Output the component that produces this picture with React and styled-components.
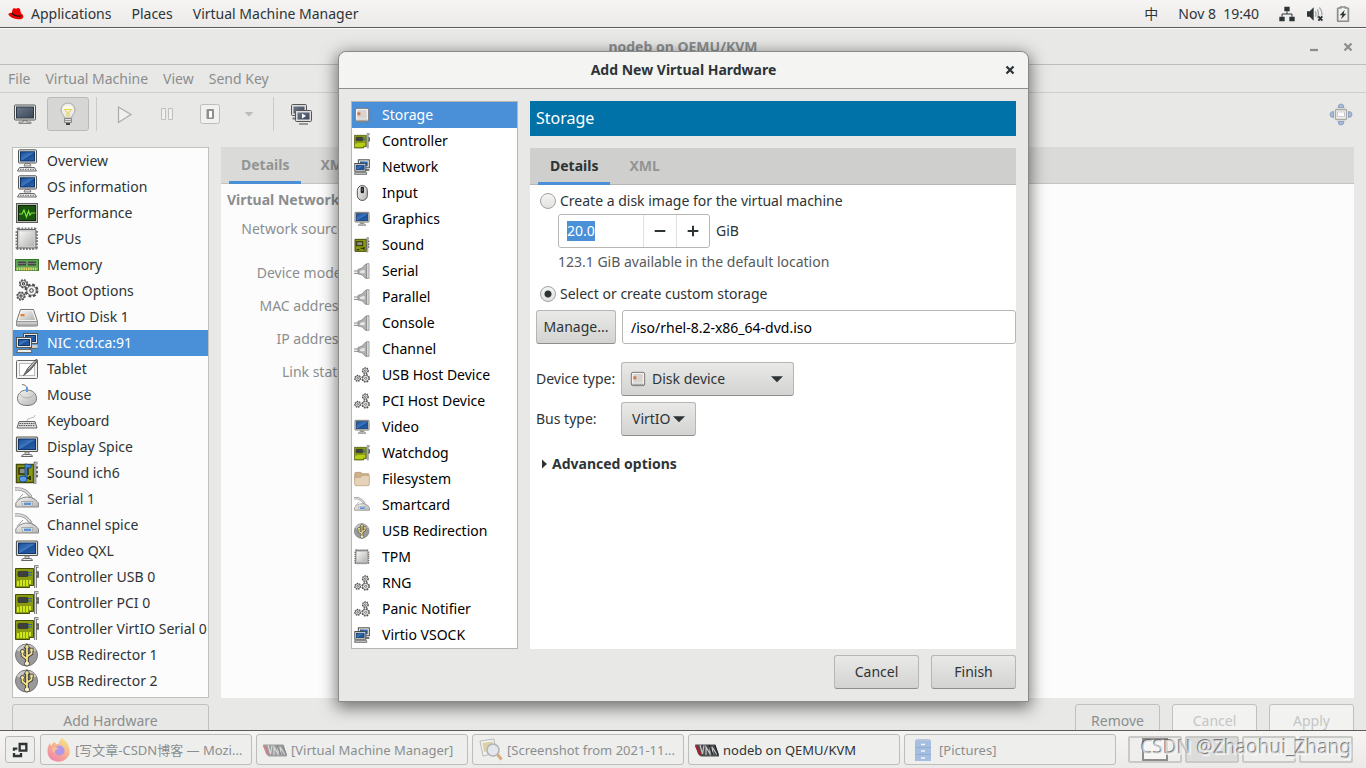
import React, { useEffect, useRef } from 'react'
import styled, { createGlobalStyle, css } from 'styled-components'

const GlobalStyle = createGlobalStyle`
    * {
        box-sizing: border-box;
    }
    body {
        margin: 0;
        background: #e8e8e6;
    }
    body, button, input, select {
        font-family: "Noto Sans", "Noto Sans CJK SC", sans-serif;
        font-size: 13px;
        line-height: 20px;
        color: #2e3436;
    }
    button {
        margin: 0;
        padding: 0;
        border: 0;
        background: none;
    }
    svg {
        display: block;
        flex: none;
    }
`

const Desktop = styled.div`
    position: relative;
    display: flex;
    flex-direction: column;
    height: 100vh;
    overflow: hidden;
`

/* ---------- top panel ---------- */

const TopBar = styled.header`
    display: flex;
    align-items: center;
    flex: none;
    height: 28px;
    padding: 0 15px 0 8px;
    background: linear-gradient(#f6f5f4, #eceae9);
    border-bottom: 1px solid #5b5b59;
`

const TopItem = styled.button`
    display: flex;
    align-items: center;
    gap: 7px;
    margin-right: 20px;
    font-size: 14px;
`

const Tray = styled.div`
    display: flex;
    align-items: center;
    margin-left: auto;
`

const TrayIcons = styled.div`
    display: flex;
    gap: 12px;
`

/* ---------- main window ---------- */

const Window = styled.main`
    display: flex;
    flex-direction: column;
    flex: 1;
    min-height: 0;
    overflow: hidden;
    color: #8b8e8f;
    border-top: 1px solid #fafafa;
`

const TitleBar = styled.div`
    display: grid;
    grid-template-columns: 1fr auto 1fr;
    align-items: center;
    flex: none;
    height: 36px;
    border-bottom: 1px solid #bdbdbb;
    font-size: 14px;
    font-weight: 700;
`

const TitleButtons = styled.div`
    grid-column: 3;
    display: flex;
    justify-content: flex-end;
    gap: 22px;
    padding-right: 12px;
    button {
        color: inherit;
    }
`

const Title = styled.div`
    grid-column: 2;
`

const MenuBar = styled.nav`
    display: flex;
    align-items: center;
    flex: none;
    gap: 15px;
    height: 28px;
    padding: 0 8px;
    border-bottom: 1px solid #cfcfcd;
`

const MenuItem = styled.button`
    font-size: 14px;
    color: #8b8e8f;
`

const ToolBar = styled.div`
    display: flex;
    align-items: center;
    flex: none;
    gap: 1px;
    height: 42px;
    padding: 0 4px;
`

const ToolButton = styled.button`
    display: flex;
    align-items: center;
    justify-content: center;
    width: ${p => p.$narrow ? '34px' : '42px'};
    height: 34px;
    border: 1px solid ${p => p.$on ? '#bbbbb9' : 'transparent'};
    border-radius: 3px;
    background: ${p => p.$on ? '#d6d6d4' : 'none'};
    color: #bcbcba;
`

const Divider = styled.div`
    width: 1px;
    height: 34px;
    margin: 0 5px 0 6px;
    background: #cacac8;
`

const Spacer = styled.div`
    flex: 1;
`

const Content = styled.div`
    display: grid;
    grid-template-columns: 197px 1fr;
    flex: none;
    gap: 6px 12px;
    padding: 12px;
`

const List = styled.div`
    display: flex;
    flex-direction: column;
    border: 1px solid ${p => p.$dim ? '#c0c0be' : '#b6b6b3'};
    background: ${p => p.$dim ? '#fcfcfc' : '#fff'};
    padding-bottom: ${p => p.$dim ? '3px' : '0'};
`

const Row = styled.button`
    display: flex;
    align-items: center;
    gap: ${p => p.$small ? '12px' : '8px'};
    height: 26px;
    padding: 0 2px;
    font-size: 14px;
    white-space: nowrap;
    color: ${p => p.$small ? '#000' : '#2e3436'};
    ${p => p.$active && css`
        background: #4a90d9;
        color: #fff;
    `}
`

const Panel = styled.section`
    display: flex;
    flex-direction: column;
    min-width: 0;
    background: ${p => p.$dim ? '#fcfcfc' : '#fff'};
`

const TabBar = styled.div`
    display: flex;
    gap: 7px;
    height: 37px;
    padding: 0 8px;
    background: ${p => p.$dim ? '#dadad8' : '#cfcfcd'};
    border-bottom: 1px solid ${p => p.$dim ? '#c4c4c2' : '#b6b6b3'};
`

const TabButton = styled.button`
    height: 37px;
    padding: 0 12px;
    font-size: 14px;
    font-weight: 700;
    color: ${p => p.$active && !p.$dim ? '#2e3436' : '#929595'};
    border-bottom: 3px solid ${p => p.$active ? '#4a90d9' : 'transparent'};
    border-top: 1px solid transparent;
`

const NicForm = styled.div`
    display: flex;
    flex-direction: column;
    width: 122px;
    margin-left: 6px;
    text-align: right;
    font-size: 14px;
    white-space: nowrap;
`

const NicTitle = styled.div`
    height: 28px;
    line-height: 32px;
    font-weight: 700;
    text-align: left;
`

const NicLabel = styled.div`
    height: 33px;
    line-height: 33px;
    margin-bottom: ${p => p.$spaced ? '11px' : '0'};
`

const Button = styled.button`
    height: 34px;
    min-width: ${p => p.$tight ? '80px' : '85px'};
    padding: 0 ${p => p.$tight ? '4px' : '8px'};
    border: 1px solid #b6b6b3;
    border-bottom-color: #8e918a;
    border-radius: 3px;
    background: linear-gradient(#e9e9e7, #d3d3d1);
    color: #2e3436;
    font-size: 14px;
    ${p => p.$dim && css`
        background: ${p.disabled ? '#f2f2f1' : '#e8e8e6'};
        border-color: #c0c0be;
        color: ${p.disabled ? '#c4c6c6' : '#8b8e8f'};
    `}
`

const ButtonRow = styled.div`
    display: flex;
    justify-content: flex-end;
    gap: 12px;
`

/* ---------- dialog ---------- */

const Dialog = styled.div`
    position: absolute;
    top: 51px;
    left: calc(50% - 345px);
    width: 691px;
    border: 1px solid #8a8a87;
    border-radius: 8px 8px 0 0;
    background: #e8e8e6;
    box-shadow: 0 4px 16px 2px rgba(0, 0, 0, 0.5);
`

const DialogTitle = styled(TitleBar)`
    height: 37px;
    border-bottom-color: #8e8e8b;
    border-radius: 8px 8px 0 0;
    background: #f4f4f3;
`

const DialogBody = styled.div`
    display: grid;
    grid-template-columns: 167px 1fr;
    gap: 6px 12px;
    padding: 12px;
`

const Side = styled.div`
    display: flex;
    flex-direction: column;
    min-width: 0;
`

const Banner = styled.h2`
    margin: 0 0 12px;
    padding: 0 6px;
    font-size: 16px;
    font-weight: 400;
    line-height: 35px;
    color: #fff;
    background: #0072a8;
`

const StoragePanel = styled(Panel)`
    flex: 1;
`

const Form = styled.form`
    display: flex;
    flex-direction: column;
    padding: 6px 0 0 6px;
    font-size: 14px;
`

const RadioLabel = styled.label`
    display: flex;
    align-items: center;
    gap: 4px;
    height: 20px;
    margin-left: 4px;
`

const Radio = styled.input`
    appearance: none;
    width: 16px;
    height: 16px;
    margin: 0;
    border: 1px solid #a2a29f;
    border-radius: 50%;
    background: linear-gradient(#f4f4f3, #e2e2e0);
    &:checked {
        background: radial-gradient(circle, #2e3436 3px, transparent 4px), linear-gradient(#f4f4f3, #e2e2e0);
    }
`

const SizeRow = styled.div`
    display: flex;
    align-items: center;
    gap: 6px;
    margin: 3px 0 4px 22px;
`

const Spin = styled.div`
    display: flex;
    width: 152px;
    height: 34px;
    border: 1px solid #b6b6b3;
    border-radius: 3px;
    background: #fff;
`

const SpinInput = styled.input`
    width: 84px;
    padding: 0 8px;
    border: 0;
    outline: 0;
    background: none;
    font-size: 14px;
    &::selection {
        background: #4a90d9;
        color: #fff;
    }
`

const SpinButton = styled.button`
    display: flex;
    align-items: center;
    justify-content: center;
    flex: 1;
    border-left: 1px solid #e0e0de;
`

const Hint = styled.div`
    margin: 0 0 12px 22px;
    color: #555a5b;
`

const PathRow = styled.div`
    display: flex;
    gap: 6px;
    margin: 6px 0 18px;
`

const PathInput = styled.input`
    flex: 1;
    min-width: 0;
    height: 34px;
    padding: 0 8px;
    border: 1px solid #b6b6b3;
    border-radius: 3px;
    font-size: 14px;
    color: #000;
`

const FieldRow = styled.div`
    display: flex;
    align-items: center;
    margin-bottom: 6px;
    label {
        width: 85px;
    }
`

const SelectBox = styled.div`
    position: relative;
    svg {
        position: absolute;
        top: 9px;
        pointer-events: none;
    }
    svg:first-child {
        left: 9px;
    }
    svg:last-child {
        right: 9px;
    }
`

const Select = styled.select`
    appearance: none;
    width: ${p => p.$narrow ? '75px' : '173px'};
    height: 34px;
    padding: 0 0 0 ${p => p.$narrow ? '10px' : '30px'};
    border: 1px solid #b6b6b3;
    border-bottom-color: #8e918a;
    border-radius: 3px;
    background: linear-gradient(#e9e9e7, #d3d3d1);
    font-size: 14px;
`

const Expander = styled.button`
    display: flex;
    align-items: center;
    gap: 2px;
    margin: 12px 0 0 2px;
    font-size: 14px;
    font-weight: 700;
`

const DialogButtons = styled(ButtonRow)`
    grid-column: 1 / -1;
`

/* ---------- bottom panel ---------- */

const TaskBar = styled.footer`
    position: relative;
    display: flex;
    align-items: center;
    flex: none;
    gap: 4px;
    height: 38px;
    padding: 0 13px 0 5px;
    background: linear-gradient(#f6f5f4, #eceae9);
    border-top: 1px solid #5b5b59;
`

const DeskButton = styled.button`
    display: flex;
    align-items: center;
    justify-content: center;
    width: 30px;
    height: 27px;
    margin-right: 1px;
    border: 1px solid #b9b9b7;
    border-radius: 3px;
    background: #eeeeed;
`

const Task = styled.button`
    display: flex;
    align-items: center;
    gap: 4px;
    flex: 0 1 212px;
    min-width: 0;
    height: 31px;
    padding: 0 4px 0 6px;
    border: 1px solid #bdbdbb;
    border-radius: 3px;
    background: #eeeeed;
    white-space: nowrap;
    color: ${p => p.$active ? '#2e3436' : '#8b8e8f'};
    svg {
        opacity: ${p => p.$active ? 1 : 0.5};
    }
`

const Workspaces = styled.div`
    display: flex;
    gap: 3px;
    margin-left: auto;
`

const Workspace = styled.button`
    display: flex;
    justify-content: center;
    width: 54px;
    height: 27px;
    border: 2px solid #c9c9c8;
    border-radius: 2px;
    background: ${p => p.$shaded ? '#dcdcdb' : '#eeeeed'};
`

const MiniWindow = styled.span`
    width: 26px;
    height: 23px;
    border: 2px solid #8d8d8c;
    background: #f6f5f4;
`

const Watermark = styled.div`
    position: absolute;
    right: 14px;
    top: 1px;
    font-size: 19px;
    line-height: 30px;
    color: rgba(225, 225, 225, 0.8);
    text-shadow: -1px -1px 0 rgba(90, 90, 90, 0.75), 1px 1px 1px rgba(255, 255, 255, 0.8);
    white-space: nowrap;
    pointer-events: none;
`

/* ---------- icons, drawn on a 24 unit grid ---------- */

const Defs = () => (
    <svg width="0" height="0" style={{ position: 'absolute' }} aria-hidden="true">
        <defs>
            <linearGradient id="screen" x1="0" y1="0" x2="1" y2="1">
                <stop offset="0" stopColor="#174a91" />
                <stop offset="0.5" stopColor="#3c78c0" />
                <stop offset="0.55" stopColor="#1c4f98" />
                <stop offset="1" stopColor="#2b65ad" />
            </linearGradient>
            <linearGradient id="slate" x1="0" y1="0" x2="1" y2="1">
                <stop offset="0" stopColor="#6d7a8a" />
                <stop offset="1" stopColor="#3a4658" />
            </linearGradient>
            <linearGradient id="metal" x1="0" y1="0" x2="1" y2="1">
                <stop offset="0" stopColor="#f6f6f6" />
                <stop offset="1" stopColor="#b4b4b2" />
            </linearGradient>
            <linearGradient id="fox" x1="0.8" y1="0" x2="0.2" y2="1">
                <stop offset="0" stopColor="#ffe226" />
                <stop offset="0.5" stopColor="#ff7139" />
                <stop offset="1" stopColor="#f5156c" />
            </linearGradient>
        </defs>
    </svg>
)

const Cog = ({ x, y, r }) => (
    <g transform={`translate(${x} ${y})`}>
        <circle r={r} fill="none" stroke="#4c4c4c" strokeWidth={r * 0.9} strokeDasharray={`${r * 0.48} ${r * 0.305}`} />
        <circle r={r} fill="#f2f2f1" stroke="#5a5a5a" strokeWidth="1" />
        <circle r={r * 0.36} fill="#fff" stroke="#444" strokeWidth="1.100" />
    </g>
)

const icons = {
    computer: (
        <>
            <rect x="3.500" y=".8" width="18" height="13.200" rx="1" fill="#e6e6e2" stroke="#54554f" />
            <rect x="5.500" y="2.800" width="14" height="9.200" fill="url(#screen)" stroke="#0f3369" />
            <path d="M10 14.500h5l1 2.500H9z" fill="#ddd" stroke="#666" strokeWidth=".8" />
            <path d="M4.500 18.500h15l2 3.500h-19z" fill="#eee" stroke="#666" />
            <path d="M5 20.300h14" stroke="#666" strokeDasharray="1.500 1" />
        </>
    ),
    monitor: (
        <>
            <rect x="1.500" y="2" width="21" height="14.500" rx="1" fill="#e6e6e2" stroke="#54554f" strokeWidth="1.200" />
            <rect x="3.500" y="4" width="17" height="10.500" fill="url(#screen)" stroke="#0f3369" />
            <path d="M10 17h4v2.500h-4z" fill="#ccc" stroke="#777" strokeWidth=".8" />
            <path d="M6.500 21.500c0-2 2-2 5.500-2s5.500 0 5.500 2z" fill="#eee" stroke="#666" />
        </>
    ),
    pulse: (
        <>
            <rect x="1.500" y="2.500" width="21" height="19" fill="#b9bab5" stroke="#5d5e59" />
            <rect x="3.500" y="4.500" width="17" height="15" fill="#1b5410" stroke="#0c2806" />
            <path d="M4 13h3l2-4 2.500 7 2-6 1.500 4 1.500-2h4" fill="none" stroke="#7be83a" strokeWidth="1.200" />
        </>
    ),
    chip: (
        <>
            <rect x="2.500" y="2.500" width="18.500" height="18.500" rx="1" fill="none" stroke="#7a7a78" strokeWidth="4" strokeDasharray="1.700 1.380" />
            <rect x="2.500" y="2.500" width="18.500" height="18.500" rx="1" fill="#ccc" stroke="#666" />
            <rect x="4.500" y="4.500" width="14.500" height="14.500" fill="url(#metal)" />
        </>
    ),
    ram: (
        <>
            <rect x=".5" y="6.500" width="23" height="11" fill="#5fa653" stroke="#34752c" />
            <path d="M3 8.500h8v4H3zM13 8.500h8v4h-8z" fill="#454545" />
            <path d="M3 10.500h18" stroke="#777" />
            <path d="M1.500 16h21" stroke="#e5d368" strokeWidth="3" strokeDasharray="1.500 .8" />
        </>
    ),
    gears: (
        <>
            <Cog x={8.500} y={4.800} r={3.200} />
            <Cog x={6} y={17} r={3.200} />
            <Cog x={16.500} y={11.500} r={4.800} />
        </>
    ),
    cogs: (
        <>
            <Cog x={17} y={5.500} r={3.600} />
            <Cog x={5.500} y={17} r={3.600} />
            <Cog x={17.500} y={17} r={4.400} />
        </>
    ),
    disk: (
        <>
            <path d="M5.500 4.500h13l4 12v3.500q0 1-1 1h-19q-1 0-1-1v-3.500z" fill="#f2f2f1" stroke="#777" />
            <path d="M1.500 16.500h21v3.500h-21z" fill="#c9c9c7" stroke="#888" strokeWidth=".8" />
            <path d="M7 6h10l3 9H4z" fill="url(#metal)" />
            <rect x="5.500" y="9" width="4" height="2.200" fill="#ec7a2d" />
        </>
    ),
    nic: (
        <>
            <rect x="8.500" y="2.500" width="14" height="10" fill="#e6e6e2" stroke="#54554f" />
            <rect x="10.500" y="4.500" width="10" height="6" fill="url(#screen)" stroke="#0f3369" />
            <path d="M14 15.500h8.500" stroke="#ccc" strokeWidth="3.500" />
            <path d="M14 17.500h9" stroke="#666" />
            <rect x="1.500" y="6.500" width="15" height="10" fill="#e6e6e2" stroke="#54554f" />
            <rect x="3.500" y="8.500" width="11" height="6" fill="url(#screen)" stroke="#0f3369" />
            <path d="M3 18.500h13l1 3H1.500z" fill="#eee" stroke="#666" />
        </>
    ),
    network: (
        <>
            <rect x="6.500" y="1.200" width="16.500" height="12" fill="#e6e6e2" stroke="#44453f" strokeWidth="1.400" />
            <rect x="9" y="3.800" width="11.500" height="7" fill="url(#screen)" />
            <path d="M18 16.500h5" stroke="#777" strokeWidth="3" />
            <rect x="1.200" y="6.800" width="16.500" height="11.500" fill="#e6e6e2" stroke="#44453f" strokeWidth="1.400" />
            <rect x="3.600" y="9.200" width="11.600" height="6.800" fill="url(#screen)" stroke="#0f3369" />
            <path d="M1 20.500h18v2.500H1z" fill="#ddd" stroke="#555" strokeWidth="1.200" />
        </>
    ),
    tablet: (
        <>
            <rect x="1.500" y="3.500" width="21" height="18" rx="1" fill="#f3f3f2" stroke="#666" />
            <rect x="4.500" y="6.500" width="15" height="12" fill="#fff" stroke="#bbb" />
            <path d="M21.500 2L13 11l-4.500 7.500 7-5.500 7-9z" fill="#777" stroke="#444" strokeWidth=".8" />
            <path d="M20.500 4l-7 8" stroke="#ddd" />
        </>
    ),
    mouse: (
        <>
            <path d="M7 1.500q3-.5 5 3v3" fill="none" stroke="#777" />
            <path d="M12 7c6 0 9.500 4 9.500 8.500S18 22.500 12 22.500 2.500 20 2.500 15.500 6 7 12 7z" fill="url(#metal)" stroke="#777" />
            <path d="M5 11q2 4 7 4t7-4" fill="none" stroke="#aaa" strokeWidth=".8" />
            <rect x="11" y="4" width="2" height="5" fill="#5b9be0" />
        </>
    ),
    keyboard: (
        <>
            <path d="M12 12q0-3 4-3t4-3" fill="none" stroke="#bbb" />
            <path d="M4 12.500h16l2 6.500H2z" fill="#ddd" stroke="#666" />
            <path d="M4.500 14.500h15M4 16.500h16" stroke="#555" strokeWidth="1.200" strokeDasharray="1.500 .8" />
        </>
    ),
    soundcard: (
        <>
            <path d="M1.500 3.500h17v18h-17z" fill="#8a9a12" stroke="#454d08" strokeWidth="1.500" />
            <rect x="4" y="7" width="9" height="6" fill="#8d8f80" stroke="#2e3205" strokeWidth="1.500" />
            <path d="M4 19h4M10 17h4M15 15v4" stroke="#2f3606" strokeWidth="2" />
            <path d="M22.500 2h-2.500v21M21 6.500h2M21 11h2M21 15h2" fill="none" stroke="#666" strokeWidth="2.600" />
            <path d="M22.500 2h-2.500v21" fill="none" stroke="#ddd" strokeWidth="1" />
        </>
    ),
    note: (
        <>
            <path d="M10 17V3l6 1v3l-4-.5V18" fill="#4a8fdd" stroke="#1d4e8f" />
            <ellipse cx="8" cy="18" rx="4" ry="3" fill="#5b9be6" stroke="#1d4e8f" />
        </>
    ),
    card: (
        <>
            <path d="M.5 3.500h18v17h-4v2H.5z" fill="#8a9a12" stroke="#454d08" />
            <rect x="3" y="6.500" width="10" height="5" rx="1" fill="#3c4043" stroke="#222" strokeWidth=".6" />
            <path d="M13 7.500h4M13 10h4" stroke="#2b62a8" strokeWidth="1.200" />
            <path d="M3 21v-5M6 21v-6M9 21v-6M12 21v-6M15 19v-4" stroke="#d7f01a" strokeWidth="1.800" />
            <path d="M23.500 1.500h-3V23M21 7.500h2.500v4H21" fill="none" stroke="#666" strokeWidth="2.600" />
            <path d="M23.500 1.500h-3V23" fill="none" stroke="#ddd" strokeWidth="1" />
        </>
    ),
    serial: (
        <>
            <path d="M0 2c9-1 12 3 16 8" fill="none" stroke="#999" strokeWidth="3.400" />
            <path d="M0 2c9-1 12 3 16 8" fill="none" stroke="#ddd" strokeWidth="1.600" />
            <path d="M8 7L2 13.500M15 9l7 5" fill="none" stroke="#999" />
            <path d="M4 12.500q8-5 16 0l3.500 3.500v4H.8v-4z" fill="url(#metal)" stroke="#8a8a88" />
            <path d="M6.500 14.500h11.500l-1 4.500H8z" fill="#f4f4f3" stroke="#999" strokeWidth=".8" />
            <path d="M8.500 15.500h8l-.5 2.500H9z" fill="#5f94cf" />
        </>
    ),
    usb: (
        <>
            <circle cx="11.500" cy="12" r="11" fill="#9a9a9a" stroke="#777" />
            <path d="M3 8a10 10 0 0 1 17 0" fill="none" stroke="#c8c8c8" strokeWidth="3" />
            <path d="M12 5v15M12 16l-4.500-3.500V9M12 13.500l4.500-3V7" stroke="#333" strokeWidth="3.400" fill="none" />
            <path d="M12 .8l3 4.200H9z" fill="#f5e38a" stroke="#333" strokeWidth=".8" />
            <circle cx="12" cy="20.500" r="2.500" fill="#fbf4c8" stroke="#333" strokeWidth=".8" />
            <circle cx="7.500" cy="8.500" r="2" fill="#f5e38a" stroke="#333" strokeWidth=".8" />
            <path d="M14.800 5.200h3.400v3.400h-3.400z" fill="#f5e38a" stroke="#333" strokeWidth=".8" />
            <path d="M12 4v15M12 16l-4.500-3.500V9M12 13.500l4.500-3V7" stroke="#f5e38a" strokeWidth="1.800" fill="none" />
        </>
    ),
    storage: (
        <>
            <rect x="2" y="2" width="20" height="20" rx="2.500" fill="#f4f2f0" stroke="#7c7875" strokeWidth="1.500" />
            <rect x="5" y="4.500" width="14" height="13" fill="#d6d3d0" />
            <path d="M3.500 20h17" stroke="#a9a6a3" strokeWidth="2" />
            <rect x="5" y="8" width="4.500" height="4.500" fill="#cf7a45" />
        </>
    ),
    pointer: (
        <>
            <rect x="5" y=".8" width="15" height="22.400" rx="7.500" fill="url(#metal)" stroke="#555" strokeWidth="1.500" />
            <rect x="10" y="2.500" width="5" height="10" rx="2" fill="#222" />
            <path d="M12.500 5v4" stroke="#999" />
        </>
    ),
    jack: (
        <>
            <path d="M0 12h7M0 15.500h7" stroke="#888" strokeWidth="1.500" />
            <path d="M6 9.500q6 0 11-7.500h2v21h-2q-4-7-11-6.500z" fill="#b0b0ae" stroke="#777" />
            <path d="M9 12.500q3-2 7-2v5q-4 0-7-1z" fill="#e6e6e4" />
            <path d="M19 1h3.500v22H19z" fill="#e4e4e4" stroke="#777" />
        </>
    ),
    folder: (
        <>
            <path d="M1 5q0-3 2-3h7q1.500 0 1.500 2H22v9H1z" fill="#cfb08c" stroke="#b3906a" />
            <path d="M1 9.500h9l2-3h11V20q0 2-2 2H3q-2 0-2-2z" fill="#e6d2b8" stroke="#b89a76" />
        </>
    ),
    console: (
        <>
            <rect x="1.500" y="3" width="21" height="15" rx="1" fill="#e9e9e7" stroke="#555" />
            <rect x="3.500" y="5" width="17" height="11" fill="url(#slate)" stroke="#2d3747" />
            <path d="M10 18.500h4V20h4v1.500H6V20h4z" fill="#ccc" stroke="#666" strokeWidth=".7" />
        </>
    ),
    bulb: (
        <>
            <path d="M12 1a7 7 0 0 1 7 7c0 4-3.500 5-3.500 8h-7C8.500 13 5 12 5 8a7 7 0 0 1 7-7z" fill="#ecece8" stroke="#aaa" />
            <path d="M12 3.500a5 5 0 0 0-5 4q5 3 10 0a5 5 0 0 0-5-4z" fill="#fdfbe0" />
            <path d="M8 7.500h8M9 7.500q1 3 3 3t3-3M11 11v4M13 11v4" fill="none" stroke="#e5cf4c" />
            <path d="M8.500 16.500h7v4h-7z" fill="#ddd" stroke="#888" />
            <path d="M8.500 18.500h7" stroke="#999" />
            <path d="M10 21h4v2h-4z" fill="#444" />
        </>
    ),
    play: <path d="M6.500 5v15.500L19 12.500z" fill="#f0f0ef" stroke="#aaaaa8" strokeWidth="1.200" />,
    pause: <path d="M6.500 6.500h4v11h-4zM13.500 6.500h4v11h-4z" fill="#efefee" stroke="#c0c0be" />,
    power: (
        <>
            <rect x="2.500" y="2.500" width="19" height="19" rx="2" fill="#f1f1f0" stroke="#bdbdbb" />
            <rect x="8.500" y="7" width="7.500" height="10" rx="1" fill="#8f8f8d" />
            <rect x="11" y="9" width="3" height="6.500" fill="#fff" />
        </>
    ),
    caret: <path d="M3 8h18l-9 9z" fill="currentColor" />,
    screens: (
        <>
            <rect x="2.500" y="2.500" width="15" height="11" rx="1" fill="#ddd" stroke="#555" />
            <rect x="4.500" y="4.500" width="11" height="7" fill="url(#slate)" />
            <path d="M3.500 16.500h5" stroke="#777" strokeWidth="2" />
            <rect x="6.500" y="8.500" width="16" height="11" rx="1" fill="#ddd" stroke="#555" />
            <rect x="8.500" y="10.500" width="12" height="7" fill="url(#slate)" />
            <path d="M13 11.500v5l4-2.500z" fill="#fff" />
            <path d="M10 22h9" stroke="#999" strokeWidth="2" />
        </>
    ),
    fullscreen: (
        <>
            <rect x="6.500" y="7.500" width="11" height="10" rx="1" fill="#f0f0ee" stroke="#a9aaa5" strokeWidth="1.300" />
            <rect x="8.500" y="10" width="7" height="4.500" fill="#fff" stroke="#ccc" />
            <path
                d="M9 5.500q0-3.500 3-3.500t3 3.500zM9 19.500q0 3.500 3 3.500t3-3.500zM4.500 9.500Q1 9.500 1 12.500t3.500 3zM19.500 9.500q3.500 0 3.500 3t-3.500 3z"
                fill="#a9bad6"
                stroke="#8399bf"
                strokeWidth=".8"
            />
        </>
    ),
    hat: (
        <>
            <path d="M5.500 11l1.500-6q.5-2 3-1.500l2 .5 3-1q2 0 3 2l1.500 6q4 2 3.500 5.500-1 4-8 3.500-9-.8-14-6.500-1.500-3 3.500-3.500z" fill="#e00" />
            <path d="M5.500 10.500q5 5.500 14 4.500" fill="none" stroke="#1a1a1a" strokeWidth="1.800" />
        </>
    ),
    lan: (
        <>
            <path d="M8 1h8v7H8zM.5 16h8v7h-8zM15.500 16h8v7h-8z" fill="#2e3436" />
            <path d="M12 8v4M4.500 16v-4h15v4" fill="none" stroke="#2e3436" strokeWidth="1.500" />
        </>
    ),
    volume: (
        <>
            <path d="M0 8h4l6-6v20l-6-6H0z" fill="#2e3436" />
            <path d="M12.500 8q2 4 0 8M15.500 5q3.500 6 0 13M18.500 2q5 6 3.500 12" fill="none" stroke="#a5a7a7" strokeWidth="2" />
            <path d="M17 15.500l6 6.500M23 15.500L17 22" stroke="#2e3436" strokeWidth="3" />
        </>
    ),
    battery: (
        <>
            <path d="M8.500 3V1.500h7V3H19q1 0 1 1v18q0 1-1 1H5q-1 0-1-1V4q0-1 1-1z" fill="none" stroke="#8b8e8f" strokeWidth="2.600" />
            <path d="M14.500 6L7 14h4l-2 6 8-8.500h-4z" fill="#2e3436" />
        </>
    ),
    close: <path d="M5 5l14 14M19 5L5 19" stroke="currentColor" strokeWidth="4.500" />,
    minimize: <path d="M4 18h16" stroke="currentColor" strokeWidth="4.500" />,
    minus: <path d="M4 12h16" stroke="currentColor" strokeWidth="3" />,
    plus: <path d="M4 12h16M12 4v16" stroke="currentColor" strokeWidth="3" />,
    triangle: <path d="M8 3l10 9-10 9z" fill="currentColor" />,
    desk: (
        <>
            <path d="M11.500 3h10v10h-10z" fill="none" stroke="#2e3436" strokeWidth="3.500" />
            <path d="M8 10H3v3M3 16.500V21h10.500v-4.500" fill="none" stroke="#2e3436" strokeWidth="3.500" />
        </>
    ),
    firefox: (
        <>
            <path d="M15 0q5 3 6.500 8Q25 16 19 21t-14 1Q-1 18 1 9q1-3 2-4l1 3q1-3 4-4l1 2h3q-1-3 3-6z" fill="url(#fox)" />
            <circle cx="12.500" cy="12.500" r="5" fill="#7542e5" />
            <path d="M6 9q4 0 6 2-5 0-4 4-4-1-2-6z" fill="#ff9640" />
        </>
    ),
    vmm: (
        <>
            <path d="M0 6.500h20l4 10v2H6L3 16z" fill="#4a4d4f" />
            <path d="M1 7.500l4.500 9.500" stroke="#a5202c" strokeWidth="2.400" />
            <path d="M5 7l2.500 9L9 7.500M11 17V9l4 7V9M18 17l-1-8 5 7.500" fill="none" stroke="#c4c7c7" strokeWidth="1.200" />
            <path d="M14 7l4 10M20 7l3 10" stroke="#222426" strokeWidth="1.200" />
        </>
    ),
    photo: (
        <>
            <path d="M1 3l14-2 2 14-13 3z" fill="#f5f5f0" stroke="#888" />
            <path d="M3.500 5l10-1.500 1 8.500-9.500 2z" fill="#c9b668" />
            <circle cx="14" cy="12" r="6" fill="#d5e2ee" stroke="#777" strokeWidth="1.500" />
            <path d="M18.500 16.500l4 5" stroke="#c76a1b" strokeWidth="3" />
        </>
    ),
    cabinet: (
        <>
            <path d="M4 3l2-2h12l2 2v20H4z" fill="#5b8fd6" />
            <path d="M4 3l2-2h12l2 2z" fill="#7f9fc9" />
            <path d="M4 9.500h16M4 16.500h16" stroke="#3d6db3" />
            <path d="M10 6.500h4M10 13h4M10 20h4" stroke="#fff" strokeWidth="1.500" />
        </>
    ),
}

icons.sound = <>{icons.soundcard}{icons.note}</>

const Icon = ({ name, size = 24 }) => (
    <svg width={size} height={size} viewBox="0 0 24 24" aria-hidden="true">{icons[name]}</svg>
)

/* ---------- data ---------- */

const devices = [
    ['computer', 'Overview'],
    ['computer', 'OS information'],
    ['pulse', 'Performance'],
    ['chip', 'CPUs'],
    ['ram', 'Memory'],
    ['gears', 'Boot Options'],
    ['disk', 'VirtIO Disk 1'],
    ['nic', 'NIC :cd:ca:91'],
    ['tablet', 'Tablet'],
    ['mouse', 'Mouse'],
    ['keyboard', 'Keyboard'],
    ['monitor', 'Display Spice'],
    ['sound', 'Sound ich6'],
    ['serial', 'Serial 1'],
    ['serial', 'Channel spice'],
    ['monitor', 'Video QXL'],
    ['card', 'Controller USB 0'],
    ['card', 'Controller PCI 0'],
    ['card', 'Controller VirtIO Serial 0'],
    ['usb', 'USB Redirector 1'],
    ['usb', 'USB Redirector 2'],
]

const hardware = [
    ['storage', 'Storage'],
    ['card', 'Controller'],
    ['network', 'Network'],
    ['pointer', 'Input'],
    ['monitor', 'Graphics'],
    ['soundcard', 'Sound'],
    ['jack', 'Serial'],
    ['jack', 'Parallel'],
    ['jack', 'Console'],
    ['jack', 'Channel'],
    ['cogs', 'USB Host Device'],
    ['cogs', 'PCI Host Device'],
    ['monitor', 'Video'],
    ['card', 'Watchdog'],
    ['folder', 'Filesystem'],
    ['serial', 'Smartcard'],
    ['usb', 'USB Redirection'],
    ['chip', 'TPM'],
    ['cogs', 'RNG'],
    ['cogs', 'Panic Notifier'],
    ['network', 'Virtio VSOCK'],
]

const tasks = [
    ['firefox', '[写文章-CSDN博客 — Mozi...'],
    ['vmm', '[Virtual Machine Manager]'],
    ['photo', '[Screenshot from 2021-11...'],
    ['vmm', 'nodeb on QEMU/KVM'],
    ['cabinet', '[Pictures]'],
]

const Tabs = ({ dim }) => (
    <TabBar $dim={dim}>
        <TabButton $active $dim={dim}>Details</TabButton>
        <TabButton $dim={dim}>XML</TabButton>
    </TabBar>
)

const MainWindow = () => (
    <Window>
        <TitleBar>
            <Title>nodeb on QEMU/KVM</Title>
            <TitleButtons>
                <button aria-label="Minimize"><Icon name="minimize" size={12} /></button>
                <button aria-label="Close"><Icon name="close" size={12} /></button>
            </TitleButtons>
        </TitleBar>
        <MenuBar>
            <MenuItem>File</MenuItem>
            <MenuItem>Virtual Machine</MenuItem>
            <MenuItem>View</MenuItem>
            <MenuItem>Send Key</MenuItem>
        </MenuBar>
        <ToolBar>
            <ToolButton aria-label="Console"><Icon name="console" /></ToolButton>
            <ToolButton $on aria-label="Details"><Icon name="bulb" /></ToolButton>
            <Divider />
            <ToolButton aria-label="Run"><Icon name="play" /></ToolButton>
            <ToolButton aria-label="Pause"><Icon name="pause" /></ToolButton>
            <ToolButton aria-label="Shut down"><Icon name="power" /></ToolButton>
            <ToolButton $narrow aria-label="Shut down menu"><Icon name="caret" size={12} /></ToolButton>
            <Divider />
            <ToolButton aria-label="Snapshots"><Icon name="screens" /></ToolButton>
            <Spacer />
            <ToolButton aria-label="Full screen"><Icon name="fullscreen" /></ToolButton>
        </ToolBar>
        <Content>
            <List $dim>
                {devices.map(([icon, label]) => (
                    <Row key={label} $active={icon === 'nic'}><Icon name={icon} />{label}</Row>
                ))}
            </List>
            <Panel $dim>
                <Tabs dim />
                <NicForm>
                    <NicTitle>Virtual Network</NicTitle>
                    <NicLabel $spaced>Network source:</NicLabel>
                    <NicLabel>Device model:</NicLabel>
                    <NicLabel>MAC address:</NicLabel>
                    <NicLabel>IP address:</NicLabel>
                    <NicLabel>Link state:</NicLabel>
                </NicForm>
            </Panel>
            <Button $dim>Add Hardware</Button>
            <ButtonRow>
                <Button $dim>Remove</Button>
                <Button $dim disabled>Cancel</Button>
                <Button $dim disabled>Apply</Button>
            </ButtonRow>
        </Content>
    </Window>
)

const AddHardware = () => {
    const size = useRef(null)

    useEffect(() => {
        size.current.focus()
        size.current.select()
    }, [])

    return (
        <Dialog role="dialog" aria-label="Add New Virtual Hardware">
            <DialogTitle>
                <Title>Add New Virtual Hardware</Title>
                <TitleButtons>
                    <button aria-label="Close"><Icon name="close" size={12} /></button>
                </TitleButtons>
            </DialogTitle>
            <DialogBody>
                <List>
                    {hardware.map(([icon, label]) => (
                        <Row key={label} $small $active={label === 'Storage'}><Icon name={icon} size={16} />{label}</Row>
                    ))}
                </List>
                <Side>
                    <Banner>Storage</Banner>
                    <StoragePanel>
                        <Tabs />
                        <Form onSubmit={e => e.preventDefault()}>
                            <RadioLabel>
                                <Radio type="radio" name="source" />
                                Create a disk image for the virtual machine
                            </RadioLabel>
                            <SizeRow>
                                <Spin>
                                    <SpinInput ref={size} aria-label="Size" defaultValue="20.0" />
                                    <SpinButton type="button" aria-label="Decrease"><Icon name="minus" size={16} /></SpinButton>
                                    <SpinButton type="button" aria-label="Increase"><Icon name="plus" size={16} /></SpinButton>
                                </Spin>
                                GiB
                            </SizeRow>
                            <Hint>123.1 GiB available in the default location</Hint>
                            <RadioLabel>
                                <Radio type="radio" name="source" defaultChecked />
                                Select or create custom storage
                            </RadioLabel>
                            <PathRow>
                                <Button type="button" $tight>Manage...</Button>
                                <PathInput aria-label="Storage path" defaultValue="/iso/rhel-8.2-x86_64-dvd.iso" />
                            </PathRow>
                            <FieldRow>
                                <label htmlFor="device">Device type:</label>
                                <SelectBox>
                                    <Icon name="storage" size={16} />
                                    <Select id="device"><option>Disk device</option></Select>
                                    <Icon name="caret" size={16} />
                                </SelectBox>
                            </FieldRow>
                            <FieldRow>
                                <label htmlFor="bus">Bus type:</label>
                                <SelectBox>
                                    <Select id="bus" $narrow><option>VirtIO</option></Select>
                                    <Icon name="caret" size={16} />
                                </SelectBox>
                            </FieldRow>
                            <Expander type="button"><Icon name="triangle" size={12} />Advanced options</Expander>
                        </Form>
                    </StoragePanel>
                </Side>
                <DialogButtons>
                    <Button>Cancel</Button>
                    <Button>Finish</Button>
                </DialogButtons>
            </DialogBody>
        </Dialog>
    )
}

const App = () => {
  return (
    <Desktop>
        <GlobalStyle />
        <Defs />
        <TopBar>
            <TopItem><Icon name="hat" size={16} />Applications</TopItem>
            <TopItem>Places</TopItem>
            <TopItem>Virtual Machine Manager</TopItem>
            <Tray>
                <TopItem>中</TopItem>
                <TopItem>Nov 8&nbsp; 19:40</TopItem>
                <TrayIcons>
                    <Icon name="lan" size={16} />
                    <Icon name="volume" size={16} />
                    <Icon name="battery" size={16} />
                </TrayIcons>
            </Tray>
        </TopBar>
        <MainWindow />
        <TaskBar>
            <DeskButton aria-label="Show desktop"><Icon name="desk" size={16} /></DeskButton>
            {tasks.map(([icon, label]) => (
                <Task key={label} $active={label.startsWith('nodeb')}><Icon name={icon} />{label}</Task>
            ))}
            <Workspaces>
                <Workspace aria-label="Workspace 1"><MiniWindow /></Workspace>
                <Workspace aria-label="Workspace 2" $shaded />
                <Workspace aria-label="Workspace 3" />
                <Workspace aria-label="Workspace 4" />
            </Workspaces>
            <Watermark>CSDN @Zhaohui_Zhang</Watermark>
        </TaskBar>
        <AddHardware />
    </Desktop>
  )
}

export default App;
